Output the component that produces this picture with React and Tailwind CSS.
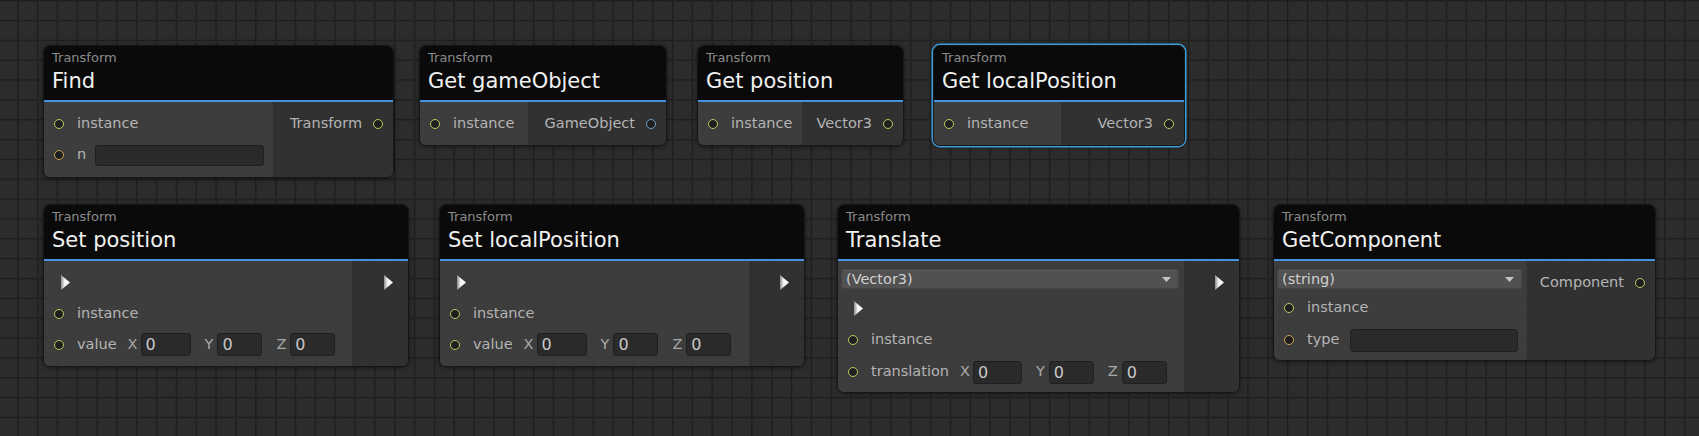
import React from "react";

// port colours
const GREEN = "border-[#b6cd5c]";
const ORANGE = "border-[#caa54c]";
const BLUE = "border-[#6ea4cf]";

function Port({ color }) {
  return (
    <span
      className={`block w-[10px] h-[10px] shrink-0 rounded-full border-[1.5px] bg-[#1e1e1e] ${color}`}
    />
  );
}

function FlowArrow() {
  return (
    <svg width="9" height="15" viewBox="0 0 9 15" className="block">
      <defs>
        <linearGradient id="flowGrad" x1="0" y1="0" x2="1" y2="0">
          <stop offset="0" stopColor="#8c8c8c" />
          <stop offset="0.4" stopColor="#f4f4f4" />
          <stop offset="1" stopColor="#ffffff" />
        </linearGradient>
      </defs>
      <polygon points="0,0 9,7.5 0,15" fill="url(#flowGrad)" />
    </svg>
  );
}

function InPort({ label, color = GREEN, h = "h-[31px]", children }) {
  return (
    <div className={`flex items-center pl-[10px] ${h}`}>
      <Port color={color} />
      <span className="ml-[13px] text-[14.5px] text-[#b4b4b4] whitespace-nowrap">
        {label}
      </span>
      {children}
    </div>
  );
}

function OutPort({ label, color = GREEN }) {
  return (
    <div className="flex items-center justify-end gap-[11px] pr-[10px] h-[31px]">
      <span className="text-[14.5px] text-[#b4b4b4] whitespace-nowrap">{label}</span>
      <Port color={color} />
    </div>
  );
}

function Field({ w }) {
  return (
    <div
      className={`${w} h-[23px] rounded-[3px] bg-[#2a2a2a] border border-[#1f1f1f] pl-[4px] text-[16px] leading-[21px] text-[#c8c8c8]`}
    >
      0
    </div>
  );
}

function Vector3Fields({ first = "w-[50px]", rest = "w-[45px]" }) {
  return (
    <div className="flex items-center ml-[11px] text-[14.5px] text-[#a9a9a9]">
      <span>X</span>
      <div className="ml-[3px]">
        <Field w={first} />
      </div>
      <span className="ml-[14px]">Y</span>
      <div className="ml-[4px]">
        <Field w={rest} />
      </div>
      <span className="ml-[14px]">Z</span>
      <div className="ml-[4px]">
        <Field w={rest} />
      </div>
    </div>
  );
}

function Dropdown({ label }) {
  return (
    <div className="ml-[3px] mr-[5px] mt-[8px] h-[20px] rounded-[3px] bg-[#515151] border border-[#454545] shadow-[inset_0_1px_0_#5c5c5c] flex items-center justify-between pl-[4px] pr-[7px]">
      <span className="text-[14.5px] leading-[18px] text-[#d0d0d0]">{label}</span>
      <svg width="9" height="5" viewBox="0 0 9 5">
        <polygon points="0,0 9,0 4.5,5" fill="#c4c4c4" />
      </svg>
    </div>
  );
}

function Node({ x, y, w, leftW, title, selected, left, right }) {
  return (
    <div
      className={`absolute ${x} ${y} ${w} rounded-[7px] border border-[#161616] overflow-hidden shadow-[0_1px_4px_rgba(0,0,0,0.45)] ${
        selected ? "ring-[1.5px] ring-[#3d9bd8]" : ""
      }`}
    >
      <div className="h-[54px] bg-[#0a0a0a] px-[8px] pt-[4px]">
        <div className="text-[13px] leading-[16px] text-[#8b8b8b]">Transform</div>
        <div className="mt-[2px] text-[21px] leading-[26px] text-[#f1f1f1] whitespace-nowrap">
          {title}
        </div>
      </div>
      <div className="h-[2px] bg-[#4792de]" />
      <div className="flex items-stretch">
        <div className={`${leftW} shrink-0 bg-[rgba(64,64,64,0.86)]`}>{left}</div>
        <div className="flex-1 bg-[rgba(50,50,50,0.86)]">{right}</div>
      </div>
    </div>
  );
}

export default function App() {
  return (
    <div className="relative w-[1699px] h-[436px] overflow-hidden bg-[#2c2c2c] bg-[linear-gradient(to_right,#1d1d1d_0px,#1d1d1d_1px,#262626_1px,#262626_2px,transparent_2px),linear-gradient(to_bottom,#1d1d1d_0px,#1d1d1d_1px,#262626_1px,#262626_2px,transparent_2px)] bg-size-[19.85px_19.85px] bg-position-[17px_0px] font-['DejaVu_Sans',sans-serif]">
      {/* top row */}
      <Node
        x="left-[43px]"
        y="top-[45px]"
        w="w-[351px]"
        leftW="w-[229px]"
        title="Find"
        left={
          <div className="pt-[6px] pb-[6px]">
            <InPort label="instance" />
            <InPort label="n" color={ORANGE} h="h-[32px]">
              <div className="ml-[9px] w-[169px] h-[21px] rounded-[3px] bg-[#2a2a2a] border border-[#1f1f1f]" />
            </InPort>
          </div>
        }
        right={
          <div className="pt-[6px]">
            <OutPort label="Transform" />
          </div>
        }
      />
      <Node
        x="left-[419px]"
        y="top-[45px]"
        w="w-[248px]"
        leftW="w-[108px]"
        title="Get gameObject"
        left={
          <div className="pt-[6px] pb-[6px]">
            <InPort label="instance" />
          </div>
        }
        right={
          <div className="pt-[6px]">
            <OutPort label="GameObject" color={BLUE} />
          </div>
        }
      />
      <Node
        x="left-[697px]"
        y="top-[45px]"
        w="w-[207px]"
        leftW="w-[104px]"
        title="Get position"
        left={
          <div className="pt-[6px] pb-[6px]">
            <InPort label="instance" />
          </div>
        }
        right={
          <div className="pt-[6px]">
            <OutPort label="Vector3" />
          </div>
        }
      />
      <Node
        x="left-[933px]"
        y="top-[45px]"
        w="w-[252px]"
        leftW="w-[127px]"
        title="Get localPosition"
        selected
        left={
          <div className="pt-[6px] pb-[6px]">
            <InPort label="instance" />
          </div>
        }
        right={
          <div className="pt-[6px]">
            <OutPort label="Vector3" />
          </div>
        }
      />

      {/* bottom row */}
      <Node
        x="left-[43px]"
        y="top-[204px]"
        w="w-[366px]"
        leftW="w-[308px]"
        title="Set position"
        left={
          <div className="pt-[6px] pb-[6px]">
            <div className="h-[31px] flex items-center pl-[17px]">
              <FlowArrow />
            </div>
            <InPort label="instance" />
            <InPort label="value">
              <Vector3Fields />
            </InPort>
          </div>
        }
        right={
          <div className="pt-[6px]">
            <div className="h-[31px] flex items-center justify-end pr-[15px]">
              <FlowArrow />
            </div>
          </div>
        }
      />
      <Node
        x="left-[439px]"
        y="top-[204px]"
        w="w-[366px]"
        leftW="w-[309px]"
        title="Set localPosition"
        left={
          <div className="pt-[6px] pb-[6px]">
            <div className="h-[31px] flex items-center pl-[17px]">
              <FlowArrow />
            </div>
            <InPort label="instance" />
            <InPort label="value">
              <Vector3Fields />
            </InPort>
          </div>
        }
        right={
          <div className="pt-[6px]">
            <div className="h-[31px] flex items-center justify-end pr-[15px]">
              <FlowArrow />
            </div>
          </div>
        }
      />
      <Node
        x="left-[837px]"
        y="top-[204px]"
        w="w-[403px]"
        leftW="w-[346px]"
        title="Translate"
        left={
          <div className="pb-[4px]">
            <Dropdown label="(Vector3)" />
            <div className="mt-[3px] h-[32px] flex items-center pl-[16px]">
              <FlowArrow />
            </div>
            <InPort label="instance" h="h-[32px]" />
            <InPort label="translation" h="h-[32px]">
              <Vector3Fields first="w-[49px]" />
            </InPort>
          </div>
        }
        right={
          <div className="pt-[6px]">
            <div className="h-[31px] flex items-center justify-end pr-[15px]">
              <FlowArrow />
            </div>
          </div>
        }
      />
      <Node
        x="left-[1273px]"
        y="top-[204px]"
        w="w-[383px]"
        leftW="w-[253px]"
        title="GetComponent"
        left={
          <div className="pb-[4px]">
            <Dropdown label="(string)" />
            <div className="mt-[3px]">
              <InPort label="instance" h="h-[32px]" />
              <InPort label="type" color={ORANGE} h="h-[32px]">
                <div className="ml-[11px] w-[168px] h-[23px] rounded-[3px] bg-[#2a2a2a] border border-[#1f1f1f]" />
              </InPort>
            </div>
          </div>
        }
        right={
          <div className="pt-[6px]">
            <OutPort label="Component" />
          </div>
        }
      />
    </div>
  );
}
